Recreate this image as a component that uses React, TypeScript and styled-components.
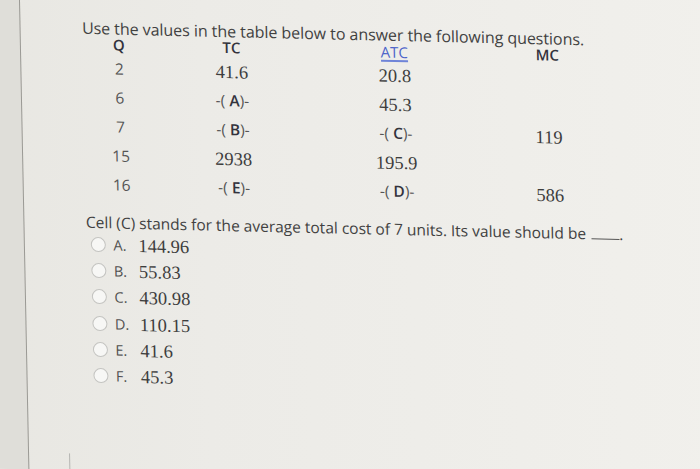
import React from "react";
import styled, { createGlobalStyle } from "styled-components";

const GlobalStyle = createGlobalStyle`
	html, body {
		margin: 0;
		overflow: hidden;
		background: #efeeea;
	}
`;

// the shot is a photo of a screen, so the whole sheet is skewed a little
const Page = styled.div`
	width: 740px;
	height: 489px;
	margin: -20px 0 0 -20px;
	display: flex;
	background: linear-gradient(90deg, #e8e7e2 0%, #ecebe7 30%, #f1f0ec 100%);
	transform-origin: 20px 20px;
	transform: matrix(1, 0.0227, 0.02, 1, 0, 0);
	font-family: "Open Sans", "Liberation Sans", sans-serif;
	color: #414141;
`;

const Gutter = styled.div`
	flex: none;
	width: 39px;
	background: #dfded9;
	border-right: 1px solid #9b9a95;
`;

const Main = styled.div`
	flex: 1;
	display: flex;
	flex-direction: column;
	padding: 36px 0 0 40px;
`;

const Content = styled.div`
	margin-left: 21.5px;
`;

const Title = styled.p`
	margin: 0;
	font-size: 16px;
	letter-spacing: -0.05px;
	line-height: 20px;
	white-space: nowrap;
`;

const Table = styled.div`
	display: grid;
	grid-template-columns: 73px 152px 174px 132px;
	grid-template-rows: 16px repeat(5, 28.8px);
	align-items: center;
	justify-items: center;
`;

const HeadCell = styled.div<{ $link?: boolean }>`
	align-self: start;
	font-size: 15px;
	line-height: ${(p) => (p.$link ? "14px" : "12px")};
	color: ${(p) => (p.$link ? "#4b63c9" : "#33333d")};
	font-weight: ${(p) => (p.$link ? 400 : 600)};
	border-bottom: ${(p) => (p.$link ? "2px solid #6f84d8" : "none")};
	padding-bottom: ${(p) => (p.$link ? "1px" : "0")};
`;

const Cell = styled.div<{ $serif?: boolean }>`
	font-family: ${(p) =>
		p.$serif ? '"Liberation Serif", "Times New Roman", serif' : '"Open Sans", "Liberation Sans", sans-serif'};
	font-size: ${(p) => (p.$serif ? "18.5px" : "15.5px")};
	color: ${(p) => (p.$serif ? "#3d3d3d" : "#555")};
	line-height: 20px;
	padding-top: ${(p) => (p.$serif ? "2px" : "0")};
	white-space: pre;
`;

const Letter = styled.span`
	font-weight: 600;
	color: #33333d;
`;

const Question = styled.p`
	margin: 15px 0 0;
	font-size: 15.5px;
	line-height: 18px;
	white-space: nowrap;
`;

const Blank = styled.span`
	display: inline-block;
	width: 28px;
	margin-left: 5px;
	border-bottom: 1px solid #555;
`;

const Options = styled.div`
	display: flex;
	flex-direction: column;
`;

const Option = styled.label`
	height: 26.3px;
	display: flex;
	align-items: center;
	gap: 8px;
	padding-left: 4px;
`;

const Radio = styled.span`
	flex: none;
	width: 13px;
	height: 13px;
	border-radius: 50%;
	border: 1px solid #c4c4c1;
	background: #f7f7f5;
`;

const OptLetter = styled.span`
	font-size: 14.5px;
	color: #505050;
	width: 17px;
`;

const OptValue = styled.span`
	font-family: "Liberation Serif", "Times New Roman", serif;
	font-size: 18.5px;
	color: #3d3d3d;
	padding-top: 2px;
`;

const Stub = styled.div`
	margin-top: auto;
	width: 1px;
	height: 17px;
	background: #b5b5b2;
`;

type Val = string | { letter: string };

const rows: Val[][] = [
	["2", "41.6", "20.8", ""],
	["6", { letter: "A" }, "45.3", ""],
	["7", { letter: "B" }, { letter: "C" }, "119"],
	["15", "2938", "195.9", ""],
	["16", { letter: "E" }, { letter: "D" }, "586"],
];

const options = [
	["A.", "144.96"],
	["B.", "55.83"],
	["C.", "430.98"],
	["D.", "110.15"],
	["E.", "41.6"],
	["F.", "45.3"],
];

const App = () => {
	return (
		<>
			<GlobalStyle />
			<Page>
				<Gutter />
				<Main>
					<Content>
						<Title>Use the values in the table below to answer the following questions.</Title>
						<Table>
							<HeadCell>Q</HeadCell>
							<HeadCell>TC</HeadCell>
							<HeadCell $link>ATC</HeadCell>
							<HeadCell>MC</HeadCell>
							{rows.map((row, r) =>
								row.map((v, c) =>
									typeof v === "string" ? (
										<Cell key={`${r}-${c}`} $serif={c > 0}>
											{v}
										</Cell>
									) : (
										<Cell key={`${r}-${c}`}>
											-( <Letter>{v.letter}</Letter>)-
										</Cell>
									)
								)
							)}
						</Table>
						<Question>
							Cell (C) stands for the average total cost of 7 units. Its value should be
							<Blank />.
						</Question>
						<Options>
							{options.map(([l, v]) => (
								<Option key={l}>
									<Radio />
									<OptLetter>{l}</OptLetter>
									<OptValue>{v}</OptValue>
								</Option>
							))}
						</Options>
					</Content>
					<Stub />
				</Main>
			</Page>
		</>
	);
};

export default App;
